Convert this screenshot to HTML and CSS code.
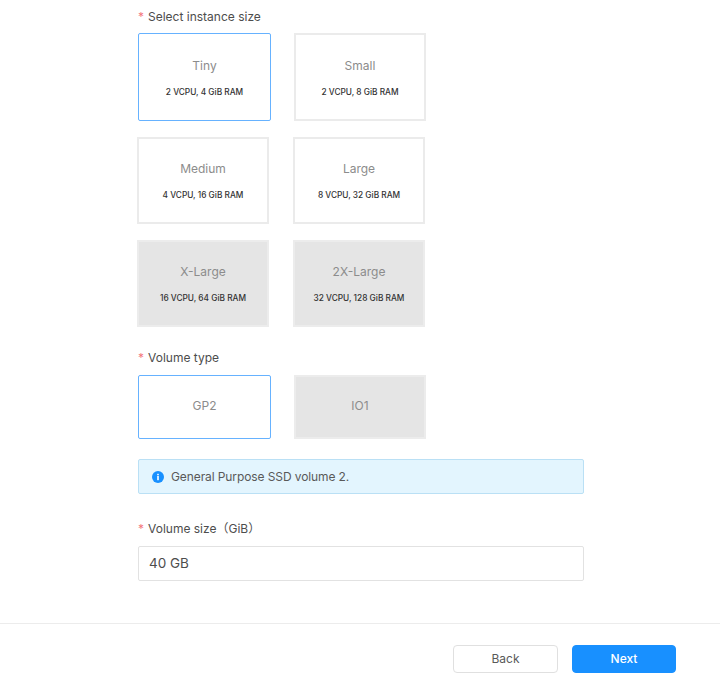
FILE: index.html
```html
<!DOCTYPE html>
<html lang="en">
<head>
<meta charset="utf-8">
<title>Instance</title>
<link rel="stylesheet" href="styles.css">
</head>
<body>
<main class="form">
  <div class="label first"><span class="req">*</span>Select instance size</div>
  <div class="row shifted">
    <div class="card selected"><div class="name">Tiny</div><div class="spec">2 VCPU, 4 GiB RAM</div></div>
    <div class="card"><div class="name">Small</div><div class="spec">2 VCPU, 8 GiB RAM</div></div>
  </div>
  <div class="row">
    <div class="card"><div class="name">Medium</div><div class="spec">4 VCPU, 16 GiB RAM</div></div>
    <div class="card"><div class="name">Large</div><div class="spec">8 VCPU, 32 GiB RAM</div></div>
  </div>
  <div class="row">
    <div class="card disabled"><div class="name">X-Large</div><div class="spec">16 VCPU, 64 GiB RAM</div></div>
    <div class="card disabled"><div class="name">2X-Large</div><div class="spec">32 VCPU, 128 GiB RAM</div></div>
  </div>
  <div class="label volume"><span class="req">*</span>Volume type</div>
  <div class="row shifted">
    <div class="card short selected"><div class="name">GP2</div></div>
    <div class="card short disabled"><div class="name">IO1</div></div>
  </div>
  <div class="alert">
    <svg class="info" width="12" height="12" viewBox="0 0 12 12" aria-hidden="true"><circle cx="6" cy="6" r="6" fill="#1890ff"/><rect x="5.2" y="5" width="1.6" height="4.2" fill="#fff"/><rect x="5.2" y="2.8" width="1.6" height="1.5" fill="#fff"/></svg>
    <span>General Purpose SSD volume 2.</span>
  </div>
  <div class="label size"><span class="req">*</span>Volume size（GiB）</div>
  <div class="input">40 GB</div>
</main>
<footer class="footer">
  <button class="btn">Back</button>
  <button class="btn primary">Next</button>
</footer>
</body>
</html>
```
FILE: styles.css
```css
* { box-sizing: border-box; }
html, body { margin: 0; padding: 0; background: #fff; }
body { width: 720px; height: 680px; overflow: hidden; font-family: Inter, "Noto Sans CJK SC", sans-serif; color: #595959; }
.form { padding-left: 137px; width: 585px; }
.label { font-size: 12px; line-height: 16px; color: #4d4d4d; padding-left: 1px; }
.label.first { margin-top: 9px; height: 24px; }
.label.volume { margin-top: 23px; height: 25px; }
.label.size { margin-top: 27px; height: 25px; }
.req { color: #f4777d; margin-right: 4px; font-size: 12px; }
.row { display: flex; gap: 24px; margin-bottom: 16px; }
.row.shifted { margin-left: 1px; gap: 23px; }
.card { width: 132px; height: 87px; border: 2px solid #ebebeb; background: #fff; display: flex; flex-direction: column; align-items: center; padding-top: 22px; }
.row.shifted .card { height: 88px; width: 132px; padding-top: 23px; }
.row.shifted .card.selected { width: 133px; border: 1px solid #66b2ff; border-radius: 2px; padding-top: 24px; }
.card.disabled { background: #e5e5e5; border-color: #ececec; }
.row.shifted .card.short { height: 64px; padding-top: 21px; margin-bottom: 4px; }
.row.shifted .card.short.selected { padding-top: 22px; }
.name { font-size: 12px; line-height: 16px; color: #8c8c8c; }
.spec { font-size: 8.3px; line-height: 12px; color: #333; margin-top: 12px; font-weight: 500; }
.alert { margin: 0 0 0 1px; width: 446px; height: 35px; background: #e3f5fe; border: 1px solid #bae0f5; border-radius: 2px; display: flex; align-items: center; gap: 7px; padding-left: 13px; font-size: 12px; letter-spacing: -0.1px; color: #595959; }
.info { flex: none; }
.input { margin-left: 1px; width: 446px; height: 35px; border: 1px solid #e2e2e2; border-radius: 2px; padding-left: 10px; font-size: 13.5px; line-height: 32px; color: #4d4d4d; }
.footer { margin-top: 42px; border-top: 1px solid #ececec; padding: 21px 44px 0 0; display: flex; justify-content: flex-end; gap: 14px; }
.btn { width: 105px; height: 28px; border: 1px solid #e0e0e0; border-radius: 4px; background: #fff; font-family: inherit; font-size: 12px; line-height: 24px; color: #595959; padding: 0; }
.btn.primary { width: 104px; background: #1890ff; border-color: #1890ff; color: #fff; font-weight: 500; }
```
